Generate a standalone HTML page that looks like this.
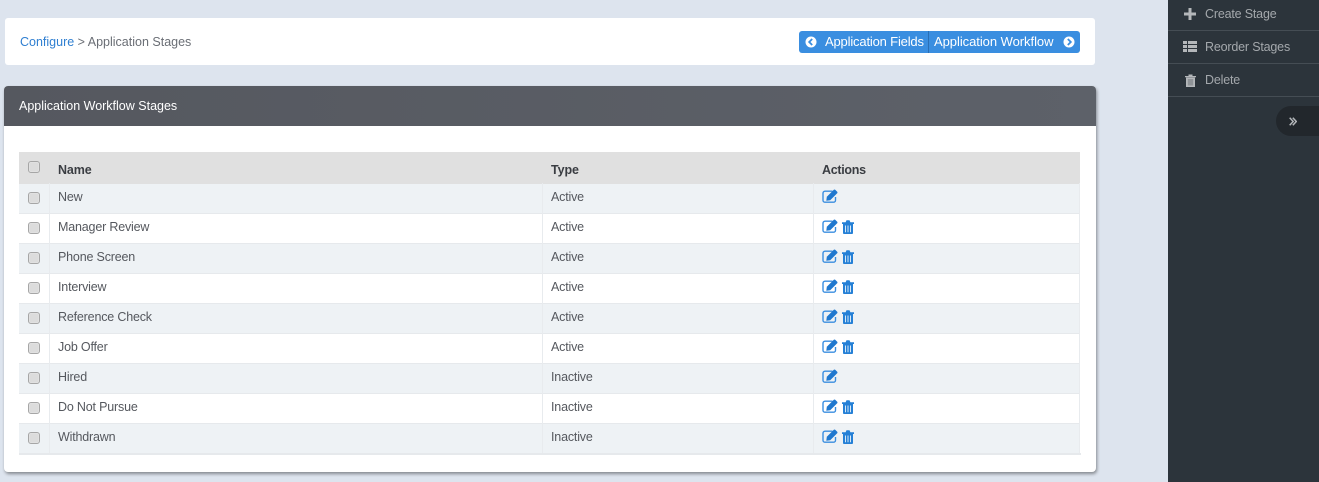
<!DOCTYPE html>
<html><head><meta charset="utf-8">
<style>
html,body{margin:0;padding:0}
body{width:1319px;height:482px;background:#dde4ee;overflow:hidden;position:relative;font-family:"Liberation Sans",sans-serif;font-size:12.5px;letter-spacing:-.18px;color:#55585e}
.a{position:absolute;white-space:nowrap}
.top{left:5px;top:18px;width:1090px;height:47px;background:#fff;border-radius:3px}
.btn{left:799px;top:31px;width:281px;height:22px;background:#3a8ee0;border-radius:3px}
.panel{left:4px;top:86px;width:1092px;height:386px;background:#fff;border-radius:4px;box-shadow:1px 2px 3px rgba(0,0,0,.4)}
.phead{left:4px;top:86px;width:1092px;height:40px;background:linear-gradient(90deg,#55585f,#5d6169);border-radius:4px 4px 0 0;color:#fff;line-height:41px;text-indent:15px;letter-spacing:0}
.thead{left:19px;top:152px;width:1061px;height:31px;background:#e0e0e0}
.row{left:19px;width:1061px;height:29px;border-top:1px solid #e6e9ec}
.s{background:#eef2f5}
.v{width:1px;top:183px;height:270px;background:#e8ebee}
.cb{left:28px;width:10px;height:10px;background:#dcdcdc;border:1px solid #a6a6a6;border-radius:3px;box-shadow:inset 0 0 1px #fff}
.t{line-height:16px}
.th{font-weight:bold;color:#3a3d42;line-height:16px;font-size:12.5px;letter-spacing:-.1px}
.side{left:1168px;top:0;width:151px;height:482px;background:#2c343b}
.sep{left:1168px;width:151px;height:1px;background:#454d54}
.st{left:1205px;color:#a4a8ac;line-height:16px}
.pill{left:1276px;top:106px;width:43px;height:30px;background:#22272c;border-radius:15px 0 0 15px}
svg{position:absolute;display:block}
</style></head><body>
<div class="a top"></div>
<div class="a t" style="left:20px;top:34px;color:#6a6e75;letter-spacing:0"><span style="color:#2f7fd1">Configure</span> &gt; Application Stages</div>
<div class="a btn"></div>
<div class="a" style="left:928px;top:31px;width:1px;height:22px;background:#2a6fb5"></div>
<svg style="left:805px;top:36px" width="12" height="12" viewBox="0 0 12 12"><circle cx="6" cy="6" r="5.500" fill="#fff"/><path d="M7.200 3L4.200 6l3 3" fill="none" stroke="#3a8ee0" stroke-width="1.800"/></svg>
<svg style="left:1063px;top:36px" width="12" height="12" viewBox="0 0 12 12"><circle cx="6" cy="6" r="5.500" fill="#fff"/><path d="M4.800 3l3 3-3 3" fill="none" stroke="#3a8ee0" stroke-width="1.800"/></svg>
<div class="a t" style="left:825px;top:34px;color:#fff;font-size:13px;letter-spacing:-.17px">Application Fields</div>
<div class="a t" style="left:934px;top:34px;color:#fff;font-size:13px;letter-spacing:-.05px">Application Workflow</div>

<div class="a panel"></div>
<div class="a phead">Application Workflow Stages</div>
<div class="a thead"></div>

<div class="a row s" style="top:183px;border-top-color:#e0e0e0"></div>
<div class="a row" style="top:213px"></div>
<div class="a row s" style="top:243px"></div>
<div class="a row" style="top:273px"></div>
<div class="a row s" style="top:303px"></div>
<div class="a row" style="top:333px"></div>
<div class="a row s" style="top:363px"></div>
<div class="a row" style="top:393px"></div>
<div class="a row s" style="top:423px"></div>
<div class="a" style="left:19px;top:453px;width:1062px;height:2px;background:#e6e9ec"></div>
<div class="a v" style="left:49px"></div>
<div class="a v" style="left:542px"></div>
<div class="a v" style="left:813px"></div>
<div class="a v" style="left:1079px"></div>

<div class="a cb" style="top:161px"></div>
<div class="a th" style="left:58px;top:162px">Name</div>
<div class="a th" style="left:551px;top:162px">Type</div>
<div class="a th" style="left:822px;top:162px;letter-spacing:-.3px">Actions</div>

<div class="a cb" style="top:192px"></div><div class="a t" style="left:58px;top:189px">New</div><div class="a t" style="left:551px;top:189px">Active</div>
<div class="a cb" style="top:222px"></div><div class="a t" style="left:58px;top:219px">Manager Review</div><div class="a t" style="left:551px;top:219px">Active</div>
<div class="a cb" style="top:252px"></div><div class="a t" style="left:58px;top:249px">Phone Screen</div><div class="a t" style="left:551px;top:249px">Active</div>
<div class="a cb" style="top:282px"></div><div class="a t" style="left:58px;top:279px">Interview</div><div class="a t" style="left:551px;top:279px">Active</div>
<div class="a cb" style="top:312px"></div><div class="a t" style="left:58px;top:309px">Reference Check</div><div class="a t" style="left:551px;top:309px">Active</div>
<div class="a cb" style="top:342px"></div><div class="a t" style="left:58px;top:339px">Job Offer</div><div class="a t" style="left:551px;top:339px">Active</div>
<div class="a cb" style="top:372px"></div><div class="a t" style="left:58px;top:369px">Hired</div><div class="a t" style="left:551px;top:369px">Inactive</div>
<div class="a cb" style="top:402px"></div><div class="a t" style="left:58px;top:399px">Do Not Pursue</div><div class="a t" style="left:551px;top:399px">Inactive</div>
<div class="a cb" style="top:432px"></div><div class="a t" style="left:58px;top:429px">Withdrawn</div><div class="a t" style="left:551px;top:429px">Inactive</div>

<svg width="0" height="0"><defs>
<symbol id="e" viewBox="0 0 16 14"><path d="M10.500 2.200H3a2 2 0 0 0-2 2v7a2 2 0 0 0 2 2h8.500a2 2 0 0 0 2-2V8" fill="none" stroke="#3a8ee0" stroke-width="1.400"/><path d="M4.800 7.800L11.800.8a1 1 0 0 1 1.400 0l2 2a1 1 0 0 1 0 1.400L8.200 11.200l-3.900.6z" fill="#1f78cf"/></symbol>
<symbol id="d" viewBox="0 0 12 14"><path d="M0 2.300h12v1.700H0zM3.500 2.500L4.500.3h3l1 2.200z" fill="#2580d6"/><path d="M1 3.500h10v9.200a1.300 1.300 0 0 1-1.300 1.300H2.300A1.300 1.300 0 0 1 1 12.700z" fill="#2580d6"/><path d="M3.500 5.500v6.800M6 5.500v6.800M8.500 5.500v6.800" stroke="#d5e8f8" stroke-width="1"/></symbol>
</defs></svg>

<svg style="left:822px;top:189px" width="16" height="14"><use href="#e"/></svg>
<svg style="left:822px;top:219px" width="16" height="14"><use href="#e"/></svg><svg style="left:842px;top:220px" width="12" height="14"><use href="#d"/></svg>
<svg style="left:822px;top:249px" width="16" height="14"><use href="#e"/></svg><svg style="left:842px;top:250px" width="12" height="14"><use href="#d"/></svg>
<svg style="left:822px;top:279px" width="16" height="14"><use href="#e"/></svg><svg style="left:842px;top:280px" width="12" height="14"><use href="#d"/></svg>
<svg style="left:822px;top:309px" width="16" height="14"><use href="#e"/></svg><svg style="left:842px;top:310px" width="12" height="14"><use href="#d"/></svg>
<svg style="left:822px;top:339px" width="16" height="14"><use href="#e"/></svg><svg style="left:842px;top:340px" width="12" height="14"><use href="#d"/></svg>
<svg style="left:822px;top:369px" width="16" height="14"><use href="#e"/></svg>
<svg style="left:822px;top:399px" width="16" height="14"><use href="#e"/></svg><svg style="left:842px;top:400px" width="12" height="14"><use href="#d"/></svg>
<svg style="left:822px;top:429px" width="16" height="14"><use href="#e"/></svg><svg style="left:842px;top:430px" width="12" height="14"><use href="#d"/></svg>

<div class="a side"></div>
<div class="a sep" style="top:30px"></div>
<div class="a sep" style="top:63px"></div>
<div class="a sep" style="top:96px"></div>
<div class="a st" style="top:6px">Create Stage</div>
<div class="a st" style="top:39px">Reorder Stages</div>
<div class="a st" style="top:72px">Delete</div>
<svg style="left:1184px;top:8px" width="12" height="12" viewBox="0 0 12 12"><path d="M4.500 0h3v4.500H12v3H7.500V12h-3V7.500H0v-3h4.500z" fill="#b4b7ba"/></svg>
<svg style="left:1183px;top:41px" width="14" height="11" viewBox="0 0 14 11"><path d="M0 0h4v3H0zM5 0h9v3H5zM0 4h4v3H0zM5 4h9v3H5zM0 8h4v3H0zM5 8h9v3H5z" fill="#b4b7ba"/></svg>
<svg style="left:1185px;top:74px" width="11" height="13" viewBox="0 0 11 13"><path d="M0 2h11v1.200H0zM3.500 2V.5h4V2" fill="#b4b7ba"/><path d="M1 3.500h9V13H1z" fill="#b4b7ba"/><path d="M2.800 5h5.400v6.500H2.800z" fill="#8f9397"/></svg>
<div class="a pill"></div>
<svg style="left:1289px;top:117px" width="8" height="9" viewBox="0 0 8 9"><path d="M.7 .7l3.500 3.800-3.500 3.800M3.800 .7l3.500 3.800-3.500 3.800" fill="none" stroke="#b4b7ba" stroke-width="1.500"/></svg>
</body></html>
